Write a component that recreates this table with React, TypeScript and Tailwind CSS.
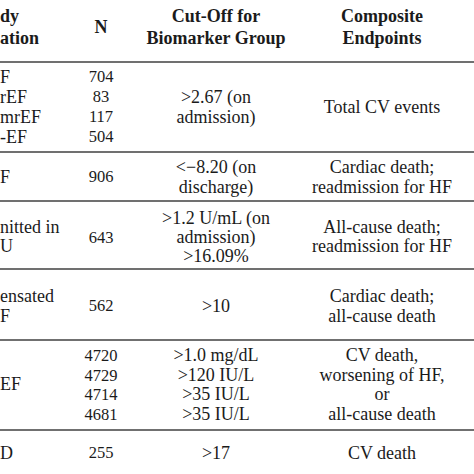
import React from "react";

type Row = {
  h: string;
  lead: string;
  pt?: string;
  c1: string[];
  n: string[];
  cut: string[];
  ep: string[];
};

const rows: Row[] = [
  {
    h: "h-[90px]",
    lead: "leading-[20px]",
    c1: ["F", "rEF", "mrEF", "-EF"],
    n: ["704", "83", "117", "504"],
    cut: [">2.67 (on", "admission)"],
    ep: ["Total CV events"],
  },
  {
    h: "h-[49px]",
    lead: "leading-[20px]",
    c1: ["F"],
    n: ["906"],
    cut: ["<\u22128.20 (on", "discharge)"],
    ep: ["Cardiac death;", "readmission for HF"],
  },
  {
    h: "h-[68px]",
    lead: "leading-[19px]",
    pt: "pt-[4px]",
    c1: ["nitted in", "U"],
    n: ["643"],
    cut: [">1.2 U/mL (on", "admission)", ">16.09%"],
    ep: ["All-cause death;", "readmission for HF"],
  },
  {
    h: "h-[71px]",
    lead: "leading-[20px]",
    pt: "pt-[2px]",
    c1: ["ensated", "F"],
    n: ["562"],
    cut: [">10"],
    ep: ["Cardiac death;", "all-cause death"],
  },
  {
    h: "h-[90px]",
    lead: "leading-[19.5px]",
    c1: ["EF"],
    n: ["4720", "4729", "4714", "4681"],
    cut: [">1.0 mg/dL", ">120 IU/L", ">35 IU/L", ">35 IU/L"],
    ep: ["CV death,", "worsening of HF,", "or", "all-cause death"],
  },
  {
    h: "h-[44px]",
    lead: "leading-[20px]",
    c1: ["D"],
    n: ["255"],
    cut: [">17"],
    ep: ["CV death"],
  },
];

function Lines({ items }: { items: string[] }) {
  return (
    <>
      {items.map((t, i) => (
        <div key={i} className="whitespace-nowrap">
          {t}
        </div>
      ))}
    </>
  );
}

export default function App() {
  return (
    <div className="w-[474px] h-[474px] overflow-hidden bg-white text-[#1b1b1b] text-[18px] font-['Liberation_Serif','Times_New_Roman',serif]">
      {/* header */}
      <div className="grid grid-cols-[60px_82px_148px_184px] h-[63px] border-b-2 border-[#707070] font-bold leading-[22px] pt-[5px] pb-[14px]">
        <div className="flex flex-col justify-center">
          <div>dy</div>
          <div>ation</div>
        </div>
        <div className="flex items-center justify-center">N</div>
        <div className="flex flex-col items-center justify-center text-center">
          <Lines items={["Cut-Off for", "Biomarker Group"]} />
        </div>
        <div className="flex flex-col items-center justify-center text-center">
          <Lines items={["Composite", "Endpoints"]} />
        </div>
      </div>

      {rows.map((r, i) => (
        <div
          key={i}
          className={`grid grid-cols-[60px_82px_148px_184px] ${r.h} ${r.lead} ${r.pt ?? ""} ${
            i < rows.length - 1 ? "border-b-2 border-[#707070]" : ""
          }`}
        >
          <div className="flex flex-col justify-center">
            <Lines items={r.c1} />
          </div>
          <div className="flex flex-col items-center justify-center text-[16.5px]">
            <Lines items={r.n} />
          </div>
          <div className="flex flex-col items-center justify-center text-center">
            <Lines items={r.cut} />
          </div>
          <div className="flex flex-col items-center justify-center text-center">
            <Lines items={r.ep} />
          </div>
        </div>
      ))}
    </div>
  );
}
